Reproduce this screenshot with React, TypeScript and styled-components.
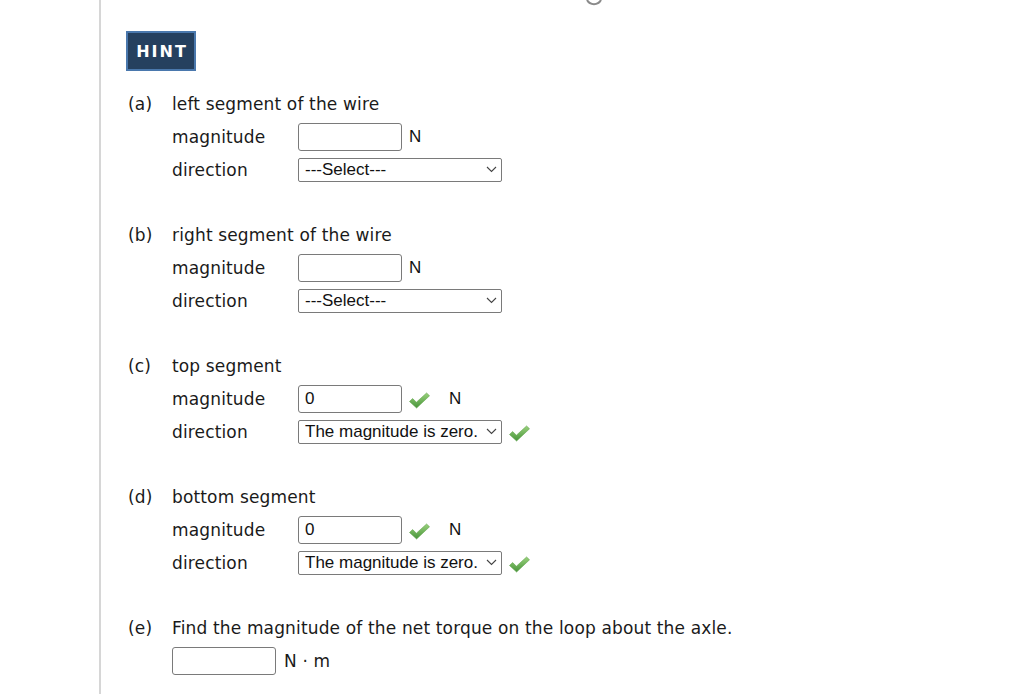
import React from "react";
import styled, { createGlobalStyle } from "styled-components";

const GlobalStyle = createGlobalStyle`
  body {
    margin: 0;
    background: #ffffff;
    font-family: "DejaVu Sans", Verdana, sans-serif;
    color: #1a1a1a;
  }
`;

const Page = styled.div`
  padding-left: 99px;
  min-height: 700px;
  overflow: hidden;
`;

const Column = styled.div`
  border-left: 2px solid #d6d6d6;
  min-height: 700px;
  padding-left: 25px;
  box-sizing: border-box;
`;

const TopArc = styled.div`
  height: 8px;
  padding-left: 458px;
  margin-top: -6px;
`;

const HintButton = styled.button`
  margin-top: 29px;
  width: 70px;
  height: 40px;
  background: #25405f;
  border: 2px solid #4a78ad;
  color: #ffffff;
  font-family: "DejaVu Sans", Verdana, sans-serif;
  font-weight: bold;
  font-size: 16px;
  letter-spacing: 2px;
  padding: 0 0 0 2px;
  cursor: pointer;
`;

const Part = styled.div`
  margin-top: ${(p: { $first?: boolean }) => (p.$first ? "16px" : "32px")};
`;

const Row = styled.div`
  display: flex;
  align-items: center;
  height: 33px;
  font-size: 17px;
  letter-spacing: 0.15px;
`;

const PartLetter = styled.span`
  width: 44px;
  padding-left: 2px;
  flex: none;
`;

const FieldLabel = styled.span`
  width: 126px;
  padding-left: 46px;
  flex: none;
`;

const Indent = styled.span`
  width: 46px;
  flex: none;
`;

const TextInput = styled.input`
  width: 104px;
  height: 28px;
  box-sizing: border-box;
  border: 1px solid #7a7a7a;
  border-radius: 3px;
  padding: 0 6px;
  font-family: "Liberation Sans", Arial, sans-serif;
  font-size: 17px;
  color: #111;
  margin: 0;
`;

const Unit = styled.span<{ $gap: number }>`
  margin-left: ${(p) => p.$gap}px;
  font-family: "Liberation Sans", Arial, sans-serif;
  font-size: 17px;
  color: #111;
`;

const UnitVerdana = styled.span`
  margin-left: 8px;
  font-size: 17px;
`;

const SelectWrap = styled.span`
  position: relative;
  display: inline-flex;
  width: 204px;
  height: 24px;
`;

const Select = styled.select`
  appearance: none;
  width: 100%;
  height: 100%;
  box-sizing: border-box;
  border: 1px solid #7a7a7a;
  border-radius: 2px;
  background: #fff;
  padding: 0 18px 0 6px;
  font-family: "Liberation Sans", Arial, sans-serif;
  font-size: 17px;
  color: #111;
  margin: 0;
`;

const Chevron = styled.svg`
  position: absolute;
  right: 5px;
  top: 8px;
  pointer-events: none;
`;

const Check = styled.svg`
  margin-left: ${(p: { $gap: number }) => p.$gap}px;
  margin-top: 4px;
  flex: none;
`;

function CheckMark({ gap }: { gap: number }) {
  return (
    <Check $gap={gap} width="21" height="17" viewBox="0 0 21 17">
      <defs>
        <linearGradient id="cg" x1="0" y1="0" x2="0" y2="1">
          <stop offset="0" stopColor="#9ad27c" />
          <stop offset="1" stopColor="#47943a" />
        </linearGradient>
      </defs>
      <path
        d="M0.5 9.5 L3.6 6.6 L7.4 10.2 L17.6 1 L20.5 3.8 L7.6 16 Z"
        fill="url(#cg)"
        stroke="#5fa34a"
        strokeWidth="0.6"
        strokeLinejoin="round"
      />
    </Check>
  );
}

function DropDown({ value }: { value: string }) {
  return (
    <SelectWrap>
      <Select value={value} onChange={() => {}}>
        <option>{value}</option>
      </Select>
      <Chevron width="11" height="7" viewBox="0 0 11 7">
        <path d="M1 1 L5.5 5.5 L10 1" fill="none" stroke="#444" strokeWidth="1.1" />
      </Chevron>
    </SelectWrap>
  );
}

type PartProps = {
  letter: string;
  title: string;
  first?: boolean;
  answered?: boolean;
};

function ForcePart({ letter, title, first, answered }: PartProps) {
  return (
    <Part $first={first}>
      <Row>
        <PartLetter>({letter})</PartLetter>
        {title}
      </Row>
      <Row>
        <FieldLabel>magnitude</FieldLabel>
        <TextInput defaultValue={answered ? "0" : ""} />
        {answered && <CheckMark gap={7} />}
        <Unit $gap={answered ? 19 : 7}>N</Unit>
      </Row>
      <Row>
        <FieldLabel>direction</FieldLabel>
        <DropDown value={answered ? "The magnitude is zero." : "---Select---"} />
        {answered && <CheckMark gap={7} />}
      </Row>
    </Part>
  );
}

export default function App() {
  return (
    <Page>
      <GlobalStyle />
      <Column>
        <TopArc>
          <svg width="20" height="10" viewBox="0 0 20 10">
            <path d="M3 1 A8 8 0 0 0 17 1" fill="none" stroke="#8a8a8a" strokeWidth="2" />
          </svg>
        </TopArc>
        <HintButton>HINT</HintButton>
        <ForcePart letter="a" title="left segment of the wire" first />
        <ForcePart letter="b" title="right segment of the wire" />
        <ForcePart letter="c" title="top segment" answered />
        <ForcePart letter="d" title="bottom segment" answered />
        <Part>
          <Row>
            <PartLetter>(e)</PartLetter>
            Find the magnitude of the net torque on the loop about the axle.
          </Row>
          <Row>
            <Indent />
            <TextInput />
            <UnitVerdana>N · m</UnitVerdana>
          </Row>
        </Part>
      </Column>
    </Page>
  );
}
